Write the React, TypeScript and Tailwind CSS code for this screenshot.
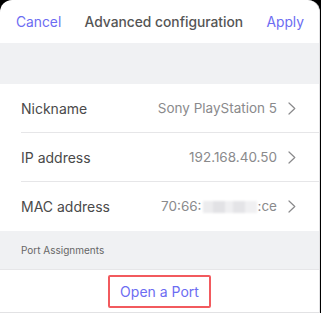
const rows = [
    { label: "Nickname", value: "Sony PlayStation 5" },
    { label: "IP address", value: "192.168.40.50" },
    { label: "MAC address", value: "mac" },
];

function Chevron() {
    return (
        <svg width="8" height="13" viewBox="0 0 8 13" fill="none" className="shrink-0">
            <polyline points="1,1 6.8,6.5 1,12" stroke="#8a8a8c" strokeWidth="1.2" strokeLinecap="round" strokeLinejoin="round" />
        </svg>
    );
}

function MacValue() {
    return (
        <span className="flex items-center">
            70:66:
            <span className="mx-[1px] flex h-[12px] w-[54px] overflow-hidden blur-[1px]">
                <span className="h-full w-[10px] bg-[#ececee]" />
                <span className="h-full w-[12px] bg-[#e2e2e5]" />
                <span className="h-full w-[8px] bg-[#efeff1]" />
                <span className="h-full w-[12px] bg-[#e4e4e7]" />
                <span className="h-full w-[12px] bg-[#f0f0f2]" />
            </span>
            :ce
        </span>
    );
}

export default function App() {
    return (
        <div className="h-[313px] w-[321px] bg-black font-['Inter',sans-serif]">
            <div className="flex h-full w-[320px] flex-col overflow-hidden rounded-t-[12px] border-r border-b border-[#e2e2e4] bg-white">
                <header className="flex h-[43px] items-center justify-between pl-[16px] pr-[15px] pt-[1px] text-[13.8px]">
                    <span className="text-[#6c6cf2]">Cancel</span>
                    <span className="font-medium text-[#555]">Advanced configuration</span>
                    <span className="text-[#6c6cf2]">Apply</span>
                </header>

                <div className="h-[41px] bg-[#f0f1f3]" />

                <div className="flex flex-col">
                    {rows.map((row, i) => (
                        <div key={row.label} className="pl-[21px]">
                            <div
                                className={`flex h-[49px] items-center justify-between pr-[23px] ${
                                    i < rows.length - 1 ? "border-b border-[#e6e6e8]" : ""
                                }`}
                            >
                                <span className="text-[14px] text-[#4a4a4a]">{row.label}</span>
                                <span className="flex items-center gap-[11px] text-[13.5px] text-[#8a8a8c]">
                                    {row.value === "mac" ? <MacValue /> : row.value}
                                    <Chevron />
                                </span>
                            </div>
                        </div>
                    ))}
                </div>

                <div className="flex h-[39px] items-center border-b border-[#e6e6e8] bg-[#f0f1f3] pl-[21px] text-[10px] text-[#666]">
                    Port Assignments
                </div>

                <div className="flex flex-1 items-start justify-center pt-[5px]">
                    <span className="rounded-[2px] border-2 border-[#f25a5e] px-[10px] py-[4px] text-[14px] text-[#6c6cf2]">
                        Open a Port
                    </span>
                </div>
            </div>
        </div>
    );
}
